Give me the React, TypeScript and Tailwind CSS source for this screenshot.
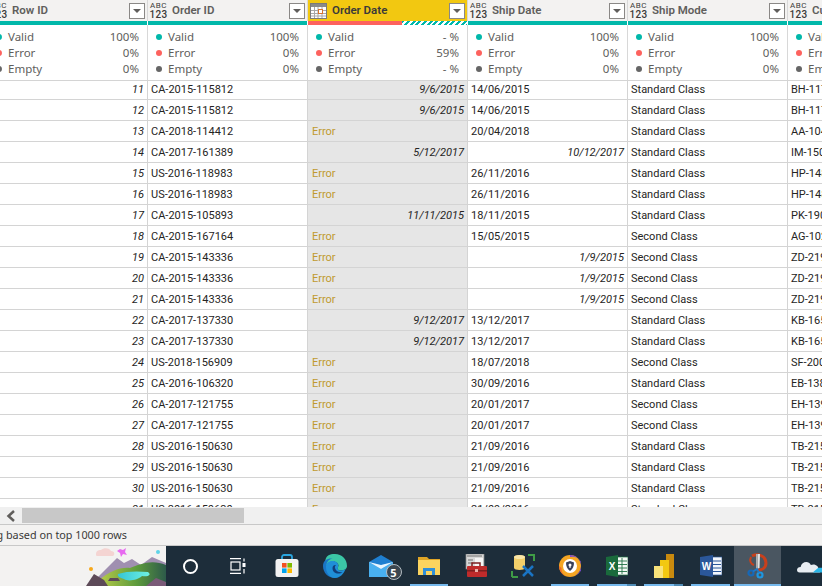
import type { ReactNode } from 'react'

type Row = [number, string, string, string, boolean, string, string]

const rows: Row[] = [
  [11, 'CA-2015-115812', '9/6/2015', '14/06/2015', false, 'Standard Class', 'BH-11710'],
  [12, 'CA-2015-115812', '9/6/2015', '14/06/2015', false, 'Standard Class', 'BH-11710'],
  [13, 'CA-2018-114412', 'Error', '20/04/2018', false, 'Standard Class', 'AA-10480'],
  [14, 'CA-2017-161389', '5/12/2017', '10/12/2017', true, 'Standard Class', 'IM-15070'],
  [15, 'US-2016-118983', 'Error', '26/11/2016', false, 'Standard Class', 'HP-14815'],
  [16, 'US-2016-118983', 'Error', '26/11/2016', false, 'Standard Class', 'HP-14815'],
  [17, 'CA-2015-105893', '11/11/2015', '18/11/2015', false, 'Standard Class', 'PK-19075'],
  [18, 'CA-2015-167164', 'Error', '15/05/2015', false, 'Second Class', 'AG-10270'],
  [19, 'CA-2015-143336', 'Error', '1/9/2015', true, 'Second Class', 'ZD-21925'],
  [20, 'CA-2015-143336', 'Error', '1/9/2015', true, 'Second Class', 'ZD-21925'],
  [21, 'CA-2015-143336', 'Error', '1/9/2015', true, 'Second Class', 'ZD-21925'],
  [22, 'CA-2017-137330', '9/12/2017', '13/12/2017', false, 'Standard Class', 'KB-16585'],
  [23, 'CA-2017-137330', '9/12/2017', '13/12/2017', false, 'Standard Class', 'KB-16585'],
  [24, 'US-2018-156909', 'Error', '18/07/2018', false, 'Second Class', 'SF-20065'],
  [25, 'CA-2016-106320', 'Error', '30/09/2016', false, 'Standard Class', 'EB-13870'],
  [26, 'CA-2017-121755', 'Error', '20/01/2017', false, 'Second Class', 'EH-13945'],
  [27, 'CA-2017-121755', 'Error', '20/01/2017', false, 'Second Class', 'EH-13945'],
  [28, 'US-2016-150630', 'Error', '21/09/2016', false, 'Standard Class', 'TB-21520'],
  [29, 'US-2016-150630', 'Error', '21/09/2016', false, 'Standard Class', 'TB-21520'],
  [30, 'US-2016-150630', 'Error', '21/09/2016', false, 'Standard Class', 'TB-21520'],
  [31, 'US-2016-150630', 'Error', '21/09/2016', false, 'Standard Class', 'TB-21520'],
]

function TypeIcon() {
  return (
    <div className="w-[17px] shrink-0 flex flex-col items-center leading-none text-[#3b3a39] font-['Roboto',sans-serif]">
      <span className="text-[8px] leading-[8px] tracking-[0.5px]">ABC</span>
      <span className="text-[10px] leading-[10px] font-medium tracking-[0.3px]">123</span>
    </div>
  )
}

function CalendarIcon() {
  return (
    <svg width="17" height="16" viewBox="0 0 17 16" className="shrink-0">
      <rect x="0.5" y="0.5" width="16" height="15" fill="#fff" stroke="#7a7a7a" />
      <rect x="1" y="1" width="15" height="3" fill="#8a8a8a" />
      <path d="M1 7.5h15M1 10.5h15M1 13h15M4.5 4v11M8 4v11M12 4v11" stroke="#a8a8a8" strokeWidth="1" />
      <rect x="8.5" y="6.5" width="4" height="4" fill="#fff" stroke="#d8732c" />
    </svg>
  )
}

function Header({ name, selected }: { name: string; selected?: boolean }) {
  return (
    <div
      className={`w-[160px] shrink-0 h-[21px] flex items-center pl-[2px] pr-[2px] border-r border-[#d8d8d8] ${
        selected ? 'bg-[#f2c811]' : 'bg-[#f3f2f1]'
      }`}
    >
      {selected ? <CalendarIcon /> : <TypeIcon />}
      <span className={`ml-[5px] flex-1 text-[11.5px] font-semibold whitespace-nowrap ${selected ? 'text-[#3b3a39]' : 'text-[#605e5c]'}`}>
        {name}
      </span>
      <div className="w-[16px] h-[16px] bg-white border border-[#8a8886] flex items-center justify-center">
        <div className="w-0 h-0 border-l-[4px] border-r-[4px] border-t-[4px] border-l-transparent border-r-transparent border-t-[#605e5c]" />
      </div>
    </div>
  )
}

function Quality({ valid, error, empty }: { valid: string; error: string; empty: string }) {
  const items = [
    ['Valid', valid, 'bg-[#01b8aa]'],
    ['Error', error, 'bg-[#fd625e]'],
    ['Empty', empty, 'bg-[#666666]'],
  ]
  return (
    <div className="w-[160px] shrink-0 h-[55px] pt-[4px] pl-[8px] pr-[8px] border-r border-[#d8d8d8] bg-white font-['Noto_Sans',sans-serif]">
      {items.map(([label, value, dot]) => (
        <div key={label} className="h-[16px] flex items-center text-[11.5px] text-[#605e5c]">
          <span className={`w-[6px] h-[6px] rounded-full ${dot}`} />
          <span className="ml-[6px] flex-1">{label}</span>
          <span>{value}</span>
        </div>
      ))}
    </div>
  )
}

function Cell({ children, right, grey, nudge, className = '' }: { children: ReactNode; right?: boolean; grey?: boolean; nudge?: boolean; className?: string }) {
  return (
    <div
      className={`w-[160px] shrink-0 h-full flex items-center px-[3px] border-r border-[#d4d4d4] whitespace-nowrap overflow-hidden text-[11px] ${
        right ? 'justify-end italic' : ''
      } ${grey ? 'bg-[#e6e6e6]' : 'bg-white'} ${nudge ? 'pt-[2px]' : ''} ${className}`}
    >
      {children}
    </div>
  )
}

function TaskSlot({ w = 'w-[47px]', bar, active, children }: { w?: string; bar?: ReactNode; active?: boolean; children: ReactNode }) {
  return (
    <div className={`${w} h-full shrink-0 relative flex items-center justify-center ${active ? 'bg-[#4a5661]' : ''}`}>
      {children}
      {bar}
    </div>
  )
}

const Bar = () => <div className="absolute bottom-0 left-[4px] right-[4px] h-[2px] bg-[#76b9ed]" />
const StackBar = () => (
  <div className="absolute bottom-0 left-[4px] right-[4px] h-[2px] bg-[#76b9ed]">
    <div className="absolute right-0 top-0 h-full w-[9px] bg-[#4f8bb5]" />
  </div>
)

function Wallpaper() {
  return (
    <svg width="80" height="39" viewBox="0 0 80 39" className="shrink-0">
      <defs>
        <linearGradient id="hill" x1="0" y1="0" x2="1" y2="0">
          <stop offset="0" stopColor="#c4d24a" />
          <stop offset="0.6" stopColor="#5c9a3c" />
          <stop offset="1" stopColor="#2d5a4a" />
        </linearGradient>
        <linearGradient id="lake" x1="0" y1="0" x2="1" y2="0">
          <stop offset="0" stopColor="#35c6d8" />
          <stop offset="1" stopColor="#6ef0e0" />
        </linearGradient>
      </defs>
      <path d="M8 34 L31 11 L38 16 L46 12 L55 18 L66 10 L80 16 V39 H4 Z" fill="#a08fb0" />
      <path d="M12 34 C24 24 34 20 44 21 C54 17 66 12 80 18 V39 H8 Z" fill="url(#hill)" />
      <path d="M32 27 C40 24 52 24 62 25 C66 28 62 30 56 29 C52 33 42 35 38 32 C34 31 31 29 32 27 Z" fill="url(#lake)" />
      <path d="M0 39 L8 27 L18 33 L22 39 Z" fill="#5d4a58" />
      <path d="M60 39 L70 31 L80 35 V39 Z" fill="#7a5a78" />
      <path d="M24 31 h8 l2 3 h-12 Z" fill="#5d4a58" />
      <path d="M10 7 C10 3 14 3 15 3 C18 0 24 1 25 4 C29 4 29 8 27 9 H11 C10 9 10 8 10 7 Z" fill="#f4d4d2" />
      <path d="M34 2 L37 3 L40 1 L39 5 L41 8 L37 7 L35 10 L34 6 L31 4 Z" fill="#e76af0" />
      <circle cx="5" cy="22" r="2" fill="#f7a81b" />
      <circle cx="72" cy="5" r="2" fill="#5fd4e8" />
    </svg>
  )
}

function Taskbar() {
  return (
    <div className="flex-1 h-full bg-[#1d2d3a] flex overflow-hidden">
      <TaskSlot w="w-[48px]">
        <div className="w-[15px] h-[15px] rounded-full border-[2px] border-white" />
      </TaskSlot>
      <TaskSlot w="w-[48px]">
        <svg width="16" height="16" viewBox="0 0 16 16" fill="none" stroke="#fff" strokeWidth="1.2">
          <path d="M0 .6h11M0 15.4h11" />
          <rect x="1" y="4" width="9" height="8" />
          <path d="M14 .5v3M14 11v4.5" />
          <rect x="12.5" y="5" width="3" height="4" fill="#fff" stroke="none" />
        </svg>
      </TaskSlot>
      <TaskSlot w="w-[49px]">
        <svg width="24" height="24" viewBox="0 0 24 24">
          <path d="M7 6 V3 a2 2 0 0 1 2-2 h6 a2 2 0 0 1 2 2 v3" fill="none" stroke="#2aa6e0" strokeWidth="1.8" />
          <rect x="0.5" y="5" width="23" height="18" rx="2.5" fill="#f2f2f2" />
          <rect x="7" y="9" width="4.6" height="4.6" fill="#f25022" />
          <rect x="12.4" y="9" width="4.6" height="4.6" fill="#7fba00" />
          <rect x="7" y="14.4" width="4.6" height="4.6" fill="#00a4ef" />
          <rect x="12.4" y="14.4" width="4.6" height="4.6" fill="#ffb900" />
        </svg>
      </TaskSlot>
      <TaskSlot w="w-[48px]">
        <svg width="24" height="24" viewBox="0 0 24 24">
          <path d="M12 0 C19 0 24 5 24 12 C24 15 21 16.5 18 16.5 C14.5 16.5 14 14.5 15 13 C16.5 10 13.5 7.5 10 7.5 C6 7.5 3.5 10.5 3 13 C2 8 0.5 0 12 0 Z" fill="#3bc6a6" />
          <path d="M0 12 C0 6 5 4 9.5 4.5 C5 5.5 3 9 3.5 13 C4 19 10 24 16 23.5 C14 24 13 24 12 24 C5 24 0 18.5 0 12 Z" fill="#1a74c4" />
          <path d="M3 12 C3.5 8.5 7 6.5 10.5 7 C14 7.5 16 10 15 13 C14 15.5 15.5 17 18.5 16.5 C20 16.3 21.5 15.8 22.5 15 C21 20 16.5 24 12 24 C6.5 24 2.5 18 3 12 Z" fill="#1f8fd8" />
          <path d="M9.5 14 C9.5 11.5 11.5 10.5 13 11 C11.5 12 11.5 14 13 16 C14.5 18 17.5 18.5 19.5 18 C17 20.5 9.5 20.5 9.5 14 Z" fill="#123f7a" />
        </svg>
      </TaskSlot>
      <TaskSlot w="w-[47px]">
        <div className="relative w-[24px] h-[22px] -ml-[4px]">
          <svg width="24" height="22" viewBox="0 0 24 22">
            <path d="M0 7 L12 0 L24 7 V22 H0 Z" fill="#1f7fd0" />
            <path d="M0 7 L12 14 L24 7 V22 H0 Z" fill="#49b0f0" />
            <path d="M0 7 L12 14 L24 7 L12 10 Z" fill="#e8f6ff" />
          </svg>
          <div className="absolute -right-[9px] top-[9px] w-[16px] h-[16px] rounded-full bg-[#3b4650] border border-[#b4bcc2] text-white text-[11px] font-bold leading-none flex items-center justify-center font-['Noto_Sans',sans-serif]">
            5
          </div>
        </div>
      </TaskSlot>
      <TaskSlot w="w-[46px]" bar={<Bar />}>
        <svg width="22" height="20" viewBox="0 0 22 20">
          <path d="M0 1 H9 L11 3 H22 V6 H0 Z" fill="#e0a526" />
          <rect x="0" y="4" width="22" height="15" fill="#fbd45f" />
          <path d="M5 19 V12 H17 V19 H14 V15 H8 V19 Z" fill="#2f8fd8" />
        </svg>
      </TaskSlot>
      <TaskSlot>
        <svg width="22" height="24" viewBox="0 0 22 24">
          <rect x="1" y="0" width="18" height="15" fill="#d8d8d8" stroke="#8a8a8a" strokeWidth="0.7" />
          <path d="M2 2h15M3 6h5M3 9h5" stroke="#6f6f6f" />
          <rect x="10" y="4" width="8" height="8" fill="#f5f5f5" />
          <path d="M7 12 V9 H15 V12" fill="none" stroke="#7d1f1f" strokeWidth="1.5" />
          <rect x="2" y="12" width="20" height="11" rx="1" fill="#bf2b2b" />
          <rect x="2" y="16" width="20" height="1.5" fill="#7d1f1f" />
          <rect x="10" y="15" width="3" height="3" fill="#e8b0a8" />
        </svg>
      </TaskSlot>
      <TaskSlot w="w-[48px]">
        <svg width="24" height="24" viewBox="0 0 24 24">
          <path d="M1 23 V17 M1 23 H7 M17 1 H23 V7" fill="none" stroke="#3f9c46" strokeWidth="2" />
          <path d="M3 3 C3 .5 14 .5 14 3 V14 C14 16.5 3 16.5 3 14 Z" fill="#f3cf6a" />
          <ellipse cx="8.5" cy="3" rx="5.5" ry="2" fill="#fbe6a8" />
          <path d="M12 12 L22 22 M22 12 L12 22" stroke="#1a74c4" strokeWidth="2.5" />
        </svg>
      </TaskSlot>
      <TaskSlot w="w-[46px]" bar={<Bar />}>
        <svg width="22" height="22" viewBox="0 0 22 22">
          <circle cx="11" cy="11" r="11" fill="#f5a623" />
          <path d="M11 0 A11 11 0 0 1 22 11 A11 11 0 0 1 16 20.5 A9 9 0 0 0 11 2 Z" fill="#7c4dc9" />
          <path d="M0 11 A11 11 0 0 0 11 22 A8 8 0 0 1 2.5 13 Z" fill="#ee6a2c" />
          <circle cx="11" cy="11" r="7" fill="#fff" />
          <path d="M11 6 L15 7.5 C15 11 14 14 11 16 C8 14 7 11 7 7.5 Z" fill="#38405a" />
          <circle cx="11" cy="10" r="1.5" fill="#fff" />
          <rect x="10.4" y="10" width="1.2" height="3" fill="#fff" />
        </svg>
      </TaskSlot>
      <TaskSlot bar={<StackBar />}>
        <svg width="22" height="22" viewBox="0 0 22 22">
          <rect x="6" y="2" width="16" height="18" fill="#f4f8f5" stroke="#217346" strokeWidth="0.7" />
          <path d="M12 6h9M12 9.5h9M12 13h9M12 16.5h9M16 3v16" stroke="#217346" strokeWidth="0.9" />
          <path d="M0 2 L12 0 V22 L0 20 Z" fill="#1a6a3c" />
          <text x="6" y="15" textAnchor="middle" fontSize="10" fontWeight="700" fill="#fff" fontFamily="Liberation Sans, sans-serif">X</text>
        </svg>
      </TaskSlot>
      <TaskSlot bar={<StackBar />}>
        <svg width="20" height="24" viewBox="0 0 20 24">
          <rect x="12" y="0" width="8" height="24" fill="#c98a0e" />
          <rect x="6" y="6" width="9" height="18" fill="#f2c811" />
          <rect x="0" y="12" width="9" height="12" fill="#f8e27a" />
        </svg>
      </TaskSlot>
      <TaskSlot bar={<Bar />}>
        <svg width="22" height="22" viewBox="0 0 22 22">
          <rect x="6" y="2" width="16" height="18" fill="#f4f7fb" stroke="#2b579a" strokeWidth="0.7" />
          <path d="M13 6h8M13 9.5h8M13 13h8M13 16.5h8" stroke="#2b579a" strokeWidth="1" />
          <path d="M0 2 L13 0 V22 L0 20 Z" fill="#2b579a" />
          <text x="6.5" y="15" textAnchor="middle" fontSize="10" fontWeight="700" fill="#fff" fontFamily="Liberation Sans, sans-serif">W</text>
        </svg>
      </TaskSlot>
      <TaskSlot active bar={<div className="absolute bottom-0 left-0 right-0 h-[2px] bg-[#76b9ed]" />}>
        <svg width="22" height="26" viewBox="0 0 22 26">
          <path d="M5 3 C11 0 19 3 19 10 C19 15 15 17 11 17" fill="none" stroke="#c8401c" strokeWidth="3" />
          <path d="M4 4 C2 8 4 11 7 12" fill="none" stroke="#c8401c" strokeWidth="2" />
          <path d="M9 1 L13 1 L12.5 15 L9.5 16 Z" fill="#e2e2e2" />
          <path d="M9 1 L11 1 L11 15.5 L9.5 16 Z" fill="#a8a8a8" />
          <circle cx="4" cy="20" r="2.5" fill="none" stroke="#1668b8" strokeWidth="2.2" />
          <circle cx="13" cy="22" r="2.5" fill="none" stroke="#1e96e0" strokeWidth="2.2" />
          <path d="M6 18.5 L10 16 L12 19.5" fill="none" stroke="#1e78c8" strokeWidth="1.8" />
        </svg>
      </TaskSlot>
      <div className="w-[13px] shrink-0" />
      <TaskSlot w="w-[28px]">
        <svg width="28" height="18" viewBox="0 0 28 18" className="ml-[2px]">
          <path d="M4 16 C0 16 0 10 5 10 C6 4 14 3 16 8 C20 6 25 9 24 13 L26 16 Z" fill="#e8edf2" />
          <path d="M18 16 H28 V11 H24 Z" fill="#29b6e8" />
        </svg>
      </TaskSlot>
    </div>
  )
}

export default function App() {
  return (
    <div className="w-[822px] h-[586px] overflow-hidden flex flex-col bg-[#f3f2f1] text-[#252423] font-['Roboto',sans-serif]">
      <div className="h-[507px] shrink-0 overflow-hidden bg-white">
        <div className="flex -ml-[12px]">
          <Header name="Row ID" />
          <Header name="Order ID" />
          <Header name="Order Date" selected />
          <Header name="Ship Date" />
          <Header name="Ship Mode" />
          <Header name="Customer ID" />
        </div>
        <div className="flex -ml-[12px] h-[4px]">
          <div className="w-[160px] shrink-0 bg-[#01b8aa] border-r border-white" />
          <div className="w-[160px] shrink-0 bg-[#01b8aa] border-r border-white" />
          <div className="w-[160px] shrink-0 flex border-r border-white">
            <div className="w-[94px] bg-[#fd625e]" />
            <div className="flex-1 bg-[repeating-linear-gradient(135deg,#01b8aa_0,#01b8aa_2px,#ffffff_2px,#ffffff_4px)]" />
          </div>
          <div className="w-[160px] shrink-0 bg-[#01b8aa] border-r border-white" />
          <div className="w-[160px] shrink-0 bg-[#01b8aa] border-r border-white" />
          <div className="w-[160px] shrink-0 bg-[#01b8aa]" />
        </div>
        <div className="flex -ml-[12px] border-b border-[#d4d4d4]">
          <Quality valid="100%" error="0%" empty="0%" />
          <Quality valid="100%" error="0%" empty="0%" />
          <Quality valid="- %" error="59%" empty="- %" />
          <Quality valid="100%" error="0%" empty="0%" />
          <Quality valid="100%" error="0%" empty="0%" />
          <Quality valid="100%" error="0%" empty="0%" />
        </div>
        {rows.map(([id, orderId, orderDate, shipDate, shipRight, shipMode, customer], i) => {
          const nudge = i > 0
          return (
            <div key={id} className={`flex -ml-[12px] border-b border-[#d4d4d4] ${i === 0 ? 'h-[19px]' : 'h-[21px]'}`}>
              <Cell right nudge={nudge}>{id}</Cell>
              <Cell nudge={nudge}>{orderId}</Cell>
              {orderDate === 'Error' ? (
                <Cell grey nudge={nudge} className="text-[#c09a2e] text-[11.5px] pl-[4px]">Error</Cell>
              ) : (
                <Cell grey right nudge={nudge}>{orderDate}</Cell>
              )}
              <Cell right={shipRight} nudge={nudge}>{shipDate}</Cell>
              <Cell nudge={nudge}>{shipMode}</Cell>
              <Cell nudge={nudge}>{customer}</Cell>
            </div>
          )
        })}
      </div>
      <div className="h-[18px] shrink-0 bg-[#f0f0f0] border-b border-[#c8c8c8] flex items-center">
        <div className="w-[22px] flex justify-center">
          <svg width="10" height="12" viewBox="0 0 10 12" fill="none" stroke="#605e5c" strokeWidth="2.5">
            <path d="M8 1 L2.5 6 L8 11" />
          </svg>
        </div>
        <div className="w-[222px] h-[15px] bg-[#c8c8c8]" />
      </div>
      <div className="h-[21px] shrink-0 flex items-center border-b border-[#c8c8c8]">
        <div className="w-[127px] flex justify-end overflow-hidden whitespace-nowrap text-[10.8px] text-[#3b3a39] font-['Noto_Sans',sans-serif]">
          <span className="shrink-0">Column profiling based on top 1000 rows</span>
        </div>
      </div>
      <div className="flex-1 flex items-stretch min-h-0">
        <div className="w-[166px] shrink-0 flex justify-end items-end">
          <Wallpaper />
        </div>
        <Taskbar />
      </div>
    </div>
  )
}
